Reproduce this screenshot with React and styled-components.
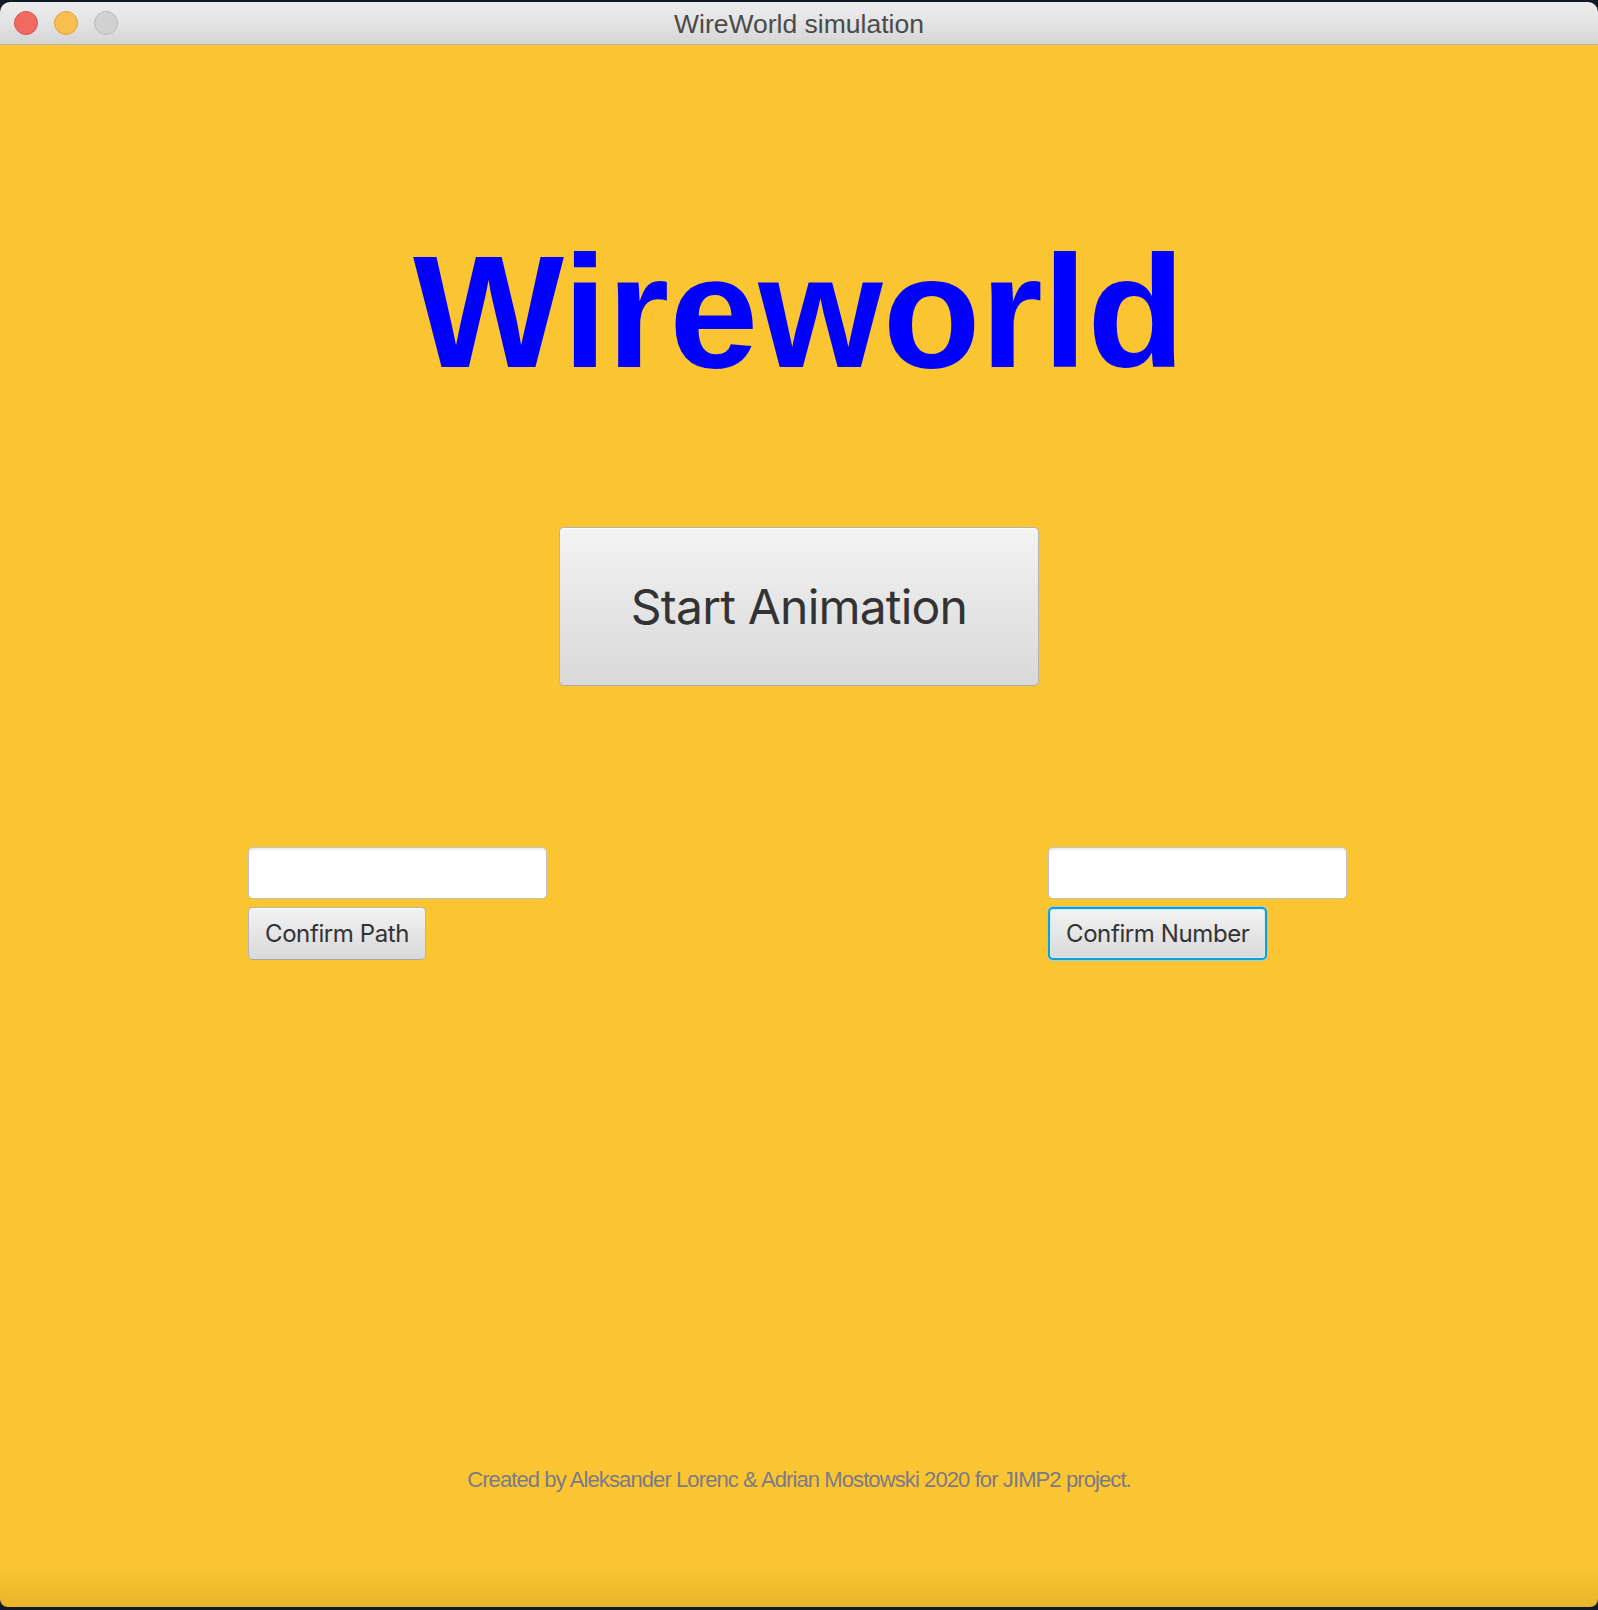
import styled, { createGlobalStyle } from "styled-components";

// 전역 스타일
const GlobalStyle = createGlobalStyle`
  html, body {
    margin: 0;
    padding: 0;
    background-color: #141a24;
  }
  * {
    box-sizing: border-box;
  }
`;

// 창 프레임
const Window = styled.div`
  // 크기 설정
  width: 1598px;
  height: 1605px;
  margin: 2px 0 3px 0;

  // Display
  display: flex;
  flex-direction: column;

  // 디자인 설정
  border-radius: 10px 10px 8px 8px;
  overflow: hidden;
`;

// 타이틀 바
const TitleBar = styled.header`
  height: 43px;
  padding: 0 14px;

  display: grid;
  grid-template-columns: 1fr auto 1fr;
  align-items: center;

  background: linear-gradient(to bottom, #ededed 0%, #e3e3e3 50%, #d5d5d5 100%);
  border-bottom: 1px solid #b4b4b4;
`;
const Lights = styled.div`
  display: flex;
  gap: 16px;
`;
const Light = styled.span`
  width: 24px;
  height: 24px;
  border-radius: 50%;
  background-color: ${(props) => props.$fill};
  border: 1px solid ${(props) => props.$edge};
`;
const TitleText = styled.span`
  padding-top: 2px;

  color: #4a4a4a;
  font-family: "Liberation Sans", Arial, sans-serif;
  font-size: 26.5px;
`;

// 본문 영역
const Content = styled.main`
  flex: 1;
  padding: 187px 0 115px 0;

  display: flex;
  flex-direction: column;
  align-items: center;

  background: linear-gradient(to bottom, #fbc531 0%, #fbc531 calc(100% - 42px), #e8b62c 100%);
`;
const Heading = styled.h1`
  margin: 0;

  color: #0000ff;
  font-family: "Liberation Sans", Arial, sans-serif;
  font-weight: 700;
  font-size: 160px;
  line-height: 160px;
`;

// 버튼 공통
const Button = styled.button`
  padding: 0 16px;

  display: flex;
  align-items: center;
  justify-content: center;

  color: #333333;
  font-family: Inter, "Noto Sans", sans-serif;
  font-size: ${(props) => props.$size || 24}px;
  letter-spacing: -0.4px;

  background: linear-gradient(to bottom, #f3f3f3 0%, #e4e4e4 55%, #d9d9d9 100%);
  border: 1px solid #b4b4b4;
  border-bottom-color: #a9a9a9;
  border-radius: 5px;
  box-shadow: inset 0 1px 0 #ffffff;

  &.focused {
    border: 2px solid #0f9fd9;
    box-shadow: 0 0 0 1px #8fd0ee, inset 0 0 0 1px #cfe9f5;
  }

  cursor: pointer;
`;
const StartButton = styled(Button)`
  width: 480px;
  height: 159px;
  margin-top: 135px;
  letter-spacing: -0.8px;
`;

// 입력 영역
const Controls = styled.section`
  width: 100%;
  margin-top: 161px;
  padding: 0 251px 0 248px;

  display: flex;
  justify-content: space-between;
`;
const Field = styled.div`
  width: 299px;

  display: flex;
  flex-direction: column;
  align-items: flex-start;
  gap: 8px;
`;
const TextInput = styled.input`
  width: 100%;
  height: 52px;

  background-color: #ffffff;
  border: 1px solid #c2c2c2;
  border-radius: 5px;
  box-shadow: inset 0 2px 2px rgba(0, 0, 0, 0.07);
  outline: none;
`;
const SmallButton = styled(Button)`
  height: 53px;
`;

const Footer = styled.p`
  margin: auto 0 0 0;

  color: #7b7a88;
  font-family: "Liberation Sans", Arial, sans-serif;
  font-size: 22px;
  line-height: 25px;
  letter-spacing: -0.9px;
`;

function App() {
  return (
    <>
      <GlobalStyle />
      <Window>
        <TitleBar>
          <Lights>
            <Light $fill="#ef6b60" $edge="#d9544b" />
            <Light $fill="#f6bf50" $edge="#dea23d" />
            <Light $fill="#d1d1d1" $edge="#b8b8b8" />
          </Lights>
          <TitleText>WireWorld simulation</TitleText>
          <span />
        </TitleBar>
        <Content>
          <Heading>Wireworld</Heading>
          <StartButton $size={48}>Start Animation</StartButton>
          <Controls>
            <Field>
              <TextInput />
              <SmallButton>Confirm Path</SmallButton>
            </Field>
            <Field>
              <TextInput />
              <SmallButton className="focused">Confirm Number</SmallButton>
            </Field>
          </Controls>
          <Footer>Created by Aleksander Lorenc &amp; Adrian Mostowski 2020 for JIMP2 project.</Footer>
        </Content>
      </Window>
    </>
  );
}

export default App;
